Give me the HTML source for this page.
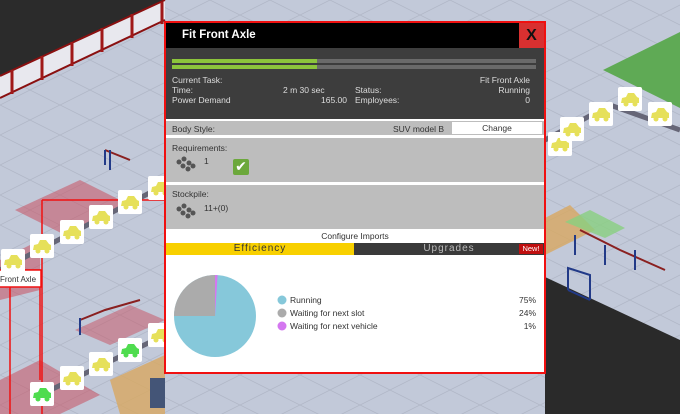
<!DOCTYPE html>
<html><head><meta charset="utf-8"><style>
*{margin:0;padding:0;box-sizing:border-box}
body{width:680px;height:414px;overflow:hidden;position:relative;font-family:"Liberation Sans",sans-serif;background:#bfc6d6}
#bg{position:absolute;left:0;top:0}
.p{position:absolute;left:164px;top:21px;width:382px;height:353px;border:2px solid #f01010;background:#fff}
.t{position:absolute;font-size:8.5px;color:#ddd;white-space:nowrap}
.g{position:absolute;font-size:8.5px;color:#333;white-space:nowrap}
</style></head><body>
<svg id="bg" width="680" height="414" viewBox="0 0 680 414">
<defs>
<pattern id="tile" width="60" height="30" patternUnits="userSpaceOnUse">
<rect width="60" height="30" fill="#c2c9d9"/>
<path d="M0 15 L30 0 L60 15 L30 30 Z" fill="none" stroke="#b0b7c6" stroke-width="0.7"/>
</pattern>
<g id="car"><rect x="0" y="0" width="24" height="24" rx="2" fill="#fff"/><path d="M3 16 L4 11 L8 10 L10 6 L16 6 L19 10 L21 11 L21 16 Z" fill="#e6e05a"/><circle cx="8" cy="17" r="2.5" fill="#e6e05a"/><circle cx="17" cy="17" r="2.5" fill="#e6e05a"/></g>
<g id="gcar"><rect x="0" y="0" width="24" height="24" rx="2" fill="#fff"/><path d="M3 16 L4 11 L8 10 L10 6 L16 6 L19 10 L21 11 L21 16 Z" fill="#4fdc4f"/><circle cx="8" cy="17" r="2.5" fill="#4fdc4f"/><circle cx="17" cy="17" r="2.5" fill="#4fdc4f"/></g>
</defs>
<rect width="680" height="414" fill="url(#tile)"/>
<polygon points="0,0 165,0 0,76" fill="#2b2b2b"/>
<polygon points="0,76 165,0 165,20 0,98" fill="#e8e8ee"/>
<path d="M0 76 L165 0 M0 98 L165 20" stroke="#8a1010" stroke-width="2"/>
<g stroke="#a01818" stroke-width="3"><path d="M12 70 V94 M42 56 V80 M72 42 V66 M102 28 V52 M132 14 V38 M162 2 V24"/></g>
<polygon points="545,277 680,340 680,414 545,414" fill="#2a2a2a"/>
<polygon points="603,70 680,32 680,108" fill="#5faa55"/>
<polygon points="545,255 595,230 570,205 545,218" fill="#d8a860" opacity="0.8"/>
<polygon points="565,222 605,238 625,228 590,210" fill="#88d080" opacity="0.8"/>
<polygon points="15,210 80,180 130,205 65,235" fill="#c85060" opacity="0.55"/>
<polygon points="0,260 40,240 40,290 0,300" fill="#c85060" opacity="0.55"/>
<polygon points="0,380 40,360 100,395 60,414 0,414" fill="#c85060" opacity="0.55"/>
<polygon points="75,330 130,305 165,320 110,345" fill="#c85060" opacity="0.5"/>
<polygon points="110,380 165,355 165,414 120,414" fill="#d8a860" opacity="0.8"/>
<path d="M0 270 L165 185 M40 395 L165 335" stroke="#667" stroke-width="5"/>
<path d="M545 140 L610 105 L680 130" stroke="#667" stroke-width="5" fill="none"/>
<path d="M105 150 L130 160 M80 320 L105 310 L140 300 M580 230 L620 250 L665 270" stroke="#8a2020" stroke-width="2" fill="none"/>
<path d="M105 165 V150 M110 150 V170 M80 335 V318 M575 255 V235 M605 265 V245 M635 270 V250" stroke="#223a88" stroke-width="2"/>
<path d="M568 290 V268 L590 275 V300 M590 300 L568 290" stroke="#223a88" stroke-width="2" fill="none"/>
<rect x="150" y="378" width="15" height="30" fill="#445577"/>
<path d="M0 270 H40 V300 M10 285 V414 M40 300 V380 M42 200 H165 M42 200 V414" stroke="#f01010" stroke-width="1.5" fill="none"/>
<rect x="-2" y="270" width="43" height="17" fill="#fff" stroke="#f01010" stroke-width="1.5"/>
<text x="0" y="282" font-family="Liberation Sans" font-size="8" fill="#333">Front Axle</text>
<use href="#car" x="1" y="249"/><use href="#car" x="30" y="234"/><use href="#car" x="60" y="220"/><use href="#car" x="89" y="205"/><use href="#car" x="118" y="190"/><use href="#car" x="148" y="176"/>
<use href="#gcar" x="30" y="382"/><use href="#car" x="60" y="366"/><use href="#car" x="89" y="352"/><use href="#gcar" x="118" y="338"/><use href="#car" x="148" y="323"/>
<use href="#car" x="548" y="132"/><use href="#car" x="560" y="117"/><use href="#car" x="589" y="102"/><use href="#car" x="618" y="87"/><use href="#car" x="648" y="102"/>
</svg>
<div class="p">
 <div style="position:absolute;left:0;top:0;width:378px;height:25px;background:#000"></div>
 <div style="position:absolute;left:16px;top:6px;color:#fff;font-weight:bold;font-size:11.5px">Fit Front Axle</div>
 <div style="position:absolute;left:353px;top:0;width:25px;height:25px;background:#d83030;color:#111;font-weight:bold;font-size:16px;text-align:center;line-height:25px">X</div>
 <div style="position:absolute;left:0;top:25px;width:378px;height:71px;background:#3d3d3d"></div>
 <div style="position:absolute;left:6px;top:36px;width:364px;height:4px;background:#6a6a6a"><div style="width:145px;height:4px;background:#8cc43c"></div></div>
 <div style="position:absolute;left:6px;top:42px;width:364px;height:4px;background:#6a6a6a"><div style="width:145px;height:4px;background:#8cc43c"></div></div>
 <div class="t" style="left:6px;top:52px">Current Task:</div>
 <div class="t" style="right:14px;top:52px">Fit Front Axle</div>
 <div class="t" style="left:6px;top:62px">Time:</div>
 <div class="t" style="left:117px;top:62px">2 m 30 sec</div>
 <div class="t" style="left:189px;top:62px">Status:</div>
 <div class="t" style="right:14px;top:62px">Running</div>
 <div class="t" style="left:6px;top:72px">Power Demand</div>
 <div class="t" style="left:155px;top:72px">165.00</div>
 <div class="t" style="left:189px;top:72px">Employees:</div>
 <div class="t" style="right:14px;top:72px">0</div>
 <div style="position:absolute;left:0;top:96px;width:378px;height:132px;background:#fff"></div>
 <div style="position:absolute;left:0;top:98px;width:378px;height:14px;background:#bdbdbd"></div>
 <div class="g" style="left:6px;top:101px">Body Style:</div>
 <div class="g" style="left:227px;top:101px">SUV model B</div>
 <div style="position:absolute;left:286px;top:99px;width:90px;height:12px;background:#fff;font-size:8.5px;color:#333;text-align:center;line-height:12px">Change</div>
 <div style="position:absolute;left:0;top:115px;width:378px;height:44px;background:#bdbdbd"></div>
 <div class="g" style="left:6px;top:120px">Requirements:</div>
 <svg style="position:absolute;left:8px;top:131px" width="24" height="20"><g fill="#555"><circle cx="5" cy="8" r="2.5"/><circle cx="10" cy="5" r="2.5"/><circle cx="15" cy="9" r="2.5"/><circle cx="9" cy="12" r="2.5"/><circle cx="14" cy="15" r="2.5"/><circle cx="19" cy="12" r="2.5"/></g></svg>
 <div class="g" style="left:38px;top:133px">1</div>
 <div style="position:absolute;left:67px;top:136px;width:16px;height:16px;background:#6ca83c;border-radius:2px;color:#fff;font-size:14px;line-height:16px;text-align:center;font-family:'DejaVu Sans'">✔</div>
 <div style="position:absolute;left:0;top:162px;width:378px;height:44px;background:#bdbdbd"></div>
 <div class="g" style="left:6px;top:166px">Stockpile:</div>
 <svg style="position:absolute;left:8px;top:178px" width="24" height="20"><g fill="#555"><circle cx="5" cy="8" r="2.5"/><circle cx="10" cy="5" r="2.5"/><circle cx="15" cy="9" r="2.5"/><circle cx="9" cy="12" r="2.5"/><circle cx="14" cy="15" r="2.5"/><circle cx="19" cy="12" r="2.5"/></g></svg>
 <div class="g" style="left:38px;top:180px">11+(0)</div>
 <div class="g" style="left:0;width:378px;text-align:center;top:208px">Configure Imports</div>
 <div style="position:absolute;left:0;top:220px;width:188px;height:12px;background:#f8d000;color:#333;font-size:10px;text-align:center;line-height:12px;letter-spacing:1px">Efficiency</div>
 <div style="position:absolute;left:188px;top:220px;width:190px;height:12px;background:#3a3a3a;color:#bbb;font-size:10px;text-align:center;line-height:12px;letter-spacing:1px">Upgrades</div>
 <div style="position:absolute;left:353px;top:221px;width:24px;height:10px;background:#c01010;color:#fff;font-size:7.5px;text-align:center;line-height:10px">New!</div>
 <svg style="position:absolute;left:7px;top:251px" width="84" height="84" viewBox="-42 -42 84 84">
  <circle r="41" fill="#86c8da"/>
  <path d="M0 0 L-41 0 A41 41 0 0 1 0 -41 Z" fill="#ababab"/>
  <path d="M0 0 L0 -41 A41 41 0 0 1 2.6 -40.9 Z" fill="#d477f0"/>
 </svg>
 <svg style="position:absolute;left:110px;top:272px" width="12" height="40"><circle cx="6" cy="5" r="4.5" fill="#86c8da"/><circle cx="6" cy="18" r="4.5" fill="#ababab"/><circle cx="6" cy="31" r="4.5" fill="#d477f0"/></svg>
 <div class="g" style="left:124px;top:272px">Running</div>
 <div class="g" style="left:124px;top:285px">Waiting for next slot</div>
 <div class="g" style="left:124px;top:298px">Waiting for next vehicle</div>
 <div class="g" style="right:8px;top:272px">75%</div>
 <div class="g" style="right:8px;top:285px">24%</div>
 <div class="g" style="right:8px;top:298px">1%</div>
</div>
</body></html>
